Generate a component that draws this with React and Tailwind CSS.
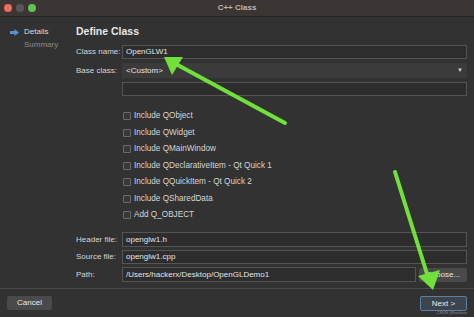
import React from 'react';

const CHECKS = [
  'Include QObject',
  'Include QWidget',
  'Include QMainWindow',
  'Include QDeclarativeItem - Qt Quick 1',
  'Include QQuickItem - Qt Quick 2',
  'Include QSharedData',
  'Add Q_OBJECT',
];

function FieldRow({ label, className = '', children }) {
  return (
    <div className={`flex items-center ${className}`}>
      <span className="w-[46px] shrink-0 text-[8px] text-[#d6d6d6]">{label}</span>
      {children}
    </div>
  );
}

function TextBox({ value, className = '' }) {
  return (
    <div className={`flex h-full flex-1 items-center border border-[#545454] bg-[#2d2d2d] px-[3px] text-[8px] text-[#e4e4e4] ${className}`}>
      {value}
    </div>
  );
}

function Arrows() {
  return (
    <svg className="pointer-events-none absolute inset-0" width="474" height="317" viewBox="0 0 474 317">
      {/* arrow to class name */}
      <line x1="285" y1="123" x2="174" y2="63" stroke="#72e03a" strokeWidth="4" strokeLinecap="round" />
      <polygon points="164,57 183,57 172,75" fill="#72e03a" />
      {/* arrow to Next */}
      <line x1="395" y1="172" x2="428" y2="277" stroke="#72e03a" strokeWidth="4" strokeLinecap="round" />
      <polygon points="418,276 440,270 433,290" fill="#72e03a" />
    </svg>
  );
}

export default function App() {
  return (
    <div className="relative flex h-[317px] w-[474px] flex-col overflow-hidden bg-[#323232] font-['Liberation_Sans',Arial,sans-serif]">
      {/* Title bar */}
      <div className="relative flex h-[16px] shrink-0 items-center justify-center bg-[#3b3533]">
        <div className="absolute left-[4px] top-[4px] flex gap-[4px]">
          <span className="h-[8px] w-[8px] rounded-full bg-[#ec6a5e]" />
          <span className="h-[8px] w-[8px] rounded-full bg-[#5b5756]" />
          <span className="h-[8px] w-[8px] rounded-full bg-[#61c554]" />
        </div>
        <span className="text-[8px] font-bold text-[#bdb8b5]">C++ Class</span>
      </div>

      {/* Body */}
      <div className="flex flex-1 border-t border-[#262322]">
        {/* Sidebar */}
        <div className="w-[76px] shrink-0 pt-[9px]">
          <div className="flex h-[12px] items-center">
            <svg className="ml-[10px] mr-[5px]" width="9" height="7" viewBox="0 0 9 7">
              <polygon points="0,2 4.5,2 4.5,0 9,3.5 4.5,7 4.5,5 0,5" fill="#5b8fd8" />
            </svg>
            <span className="text-[8px] text-[#dcdcdc]">Details</span>
          </div>
          <div className="mt-[1px] h-[12px] pl-[24px] text-[8px] leading-[12px] text-[#8c8c8c]">Summary</div>
        </div>

        {/* Main */}
        <div className="mr-[7px] flex flex-1 flex-col">
          <h1 className="mt-[8px] h-[12px] text-[10.5px] font-bold leading-[12px] text-[#e6e6e6]">Define Class</h1>

          <FieldRow label="Class name:" className="mt-[8px] h-[14px]">
            <TextBox value="OpenGLW1" className="border-[#3e5878]" />
          </FieldRow>

          <FieldRow label="Base class:" className="mt-[4px] h-[15px]">
            <div className="flex h-full flex-1 items-center justify-between bg-[#3b3b3b] pl-[4px] pr-[4px] text-[8px] text-[#e4e4e4]">
              <span>&lt;Custom&gt;</span>
              <span className="text-[6px] text-[#cfcfcf]">▼</span>
            </div>
          </FieldRow>

          <FieldRow label="" className="mt-[4px] h-[14px]">
            <TextBox value="" />
          </FieldRow>

          <div className="mt-[12px] flex flex-col pl-[47px]">
            {CHECKS.map((c) => (
              <div key={c} className="flex h-[16.5px] items-center">
                <span className="mr-[3px] h-[8px] w-[8px] rounded-[1px] border border-[#6a6a6a] bg-[#383838]" />
                <span className="text-[8.2px] text-[#d6d6d6]">{c}</span>
              </div>
            ))}
          </div>

          <FieldRow label="Header file:" className="mt-[8.5px] h-[15px]">
            <TextBox value="openglw1.h" />
          </FieldRow>
          <FieldRow label="Source file:" className="mt-[3px] h-[14px]">
            <TextBox value="openglw1.cpp" />
          </FieldRow>
          <FieldRow label="Path:" className="mt-[3px] h-[15px]">
            <TextBox value="/Users/hackerx/Desktop/OpenGLDemo1" />
            <div className="ml-[3px] flex h-[14px] w-[48px] items-center justify-center rounded-[2px] bg-[#4a4a4a] text-[8px] text-[#e4e4e4]">
              Choose...
            </div>
          </FieldRow>
        </div>
      </div>

      {/* Footer */}
      <div className="relative flex h-[29px] shrink-0 items-start justify-between border-t border-[#4a4a4a] px-[7px] pt-[7px]">
        <div className="flex h-[14px] w-[45px] items-center justify-center rounded-[2px] bg-[#4a4a4a] text-[8px] text-[#ececec]">
          Cancel
        </div>
        <div className="flex h-[15px] w-[47px] items-center justify-center rounded-[2px] border border-[#5f7f9f] bg-[#3c4450] text-[8px] text-[#ececec]">
          Next &gt;
        </div>
        <span className="absolute bottom-[1px] right-[7px] text-[4px] text-[#8a97a4]">CSDN @hackerx</span>
      </div>

      <Arrows />
    </div>
  );
}
